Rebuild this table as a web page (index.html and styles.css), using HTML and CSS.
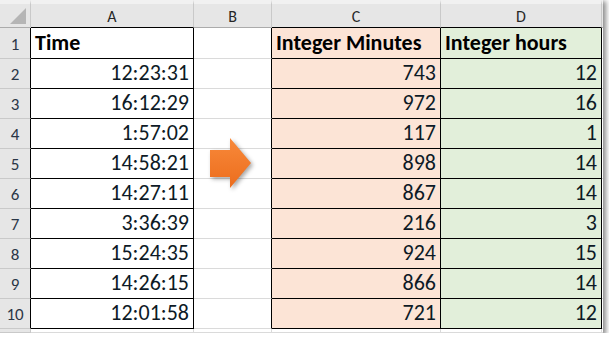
FILE: index.html
```html
<!DOCTYPE html>
<html>
<head>
<meta charset="utf-8">
<link rel="stylesheet" href="styles.css">
</head>
<body>
<div class="frame">
  <div class="sheet">
    <div class="c hd corner"><svg width="18" height="18" viewBox="0 0 18 18"><polygon points="17,1 17,17 1,17" fill="#b5b5b5"/></svg></div>
    <div class="c hd kb">A</div>
    <div class="c hd">B</div>
    <div class="c hd kb">C</div>
    <div class="c hd kb">D</div>
    <div class="c hd e"></div>

    <div class="c rh">1</div>
    <div class="c a k b">Time</div>
    <div class="c gap"></div>
    <div class="c mins k b">Integer Minutes</div>
    <div class="c hrs k b">Integer hours</div>
    <div class="c e"></div>

    <div class="c rh">2</div>
    <div class="c a k n">12:23:31</div>
    <div class="c gap"></div>
    <div class="c mins k n">743</div>
    <div class="c hrs k n">12</div>
    <div class="c e"></div>

    <div class="c rh">3</div>
    <div class="c a k n">16:12:29</div>
    <div class="c gap"></div>
    <div class="c mins k n">972</div>
    <div class="c hrs k n">16</div>
    <div class="c e"></div>

    <div class="c rh">4</div>
    <div class="c a k n">1:57:02</div>
    <div class="c gap"></div>
    <div class="c mins k n">117</div>
    <div class="c hrs k n">1</div>
    <div class="c e"></div>

    <div class="c rh">5</div>
    <div class="c a k n">14:58:21</div>
    <div class="c gap"></div>
    <div class="c mins k n">898</div>
    <div class="c hrs k n">14</div>
    <div class="c e"></div>

    <div class="c rh">6</div>
    <div class="c a k n">14:27:11</div>
    <div class="c gap"></div>
    <div class="c mins k n">867</div>
    <div class="c hrs k n">14</div>
    <div class="c e"></div>

    <div class="c rh">7</div>
    <div class="c a k n">3:36:39</div>
    <div class="c gap"></div>
    <div class="c mins k n">216</div>
    <div class="c hrs k n">3</div>
    <div class="c e"></div>

    <div class="c rh">8</div>
    <div class="c a k n">15:24:35</div>
    <div class="c gap"></div>
    <div class="c mins k n">924</div>
    <div class="c hrs k n">15</div>
    <div class="c e"></div>

    <div class="c rh">9</div>
    <div class="c a k n">14:26:15</div>
    <div class="c gap"></div>
    <div class="c mins k n">866</div>
    <div class="c hrs k n">14</div>
    <div class="c e"></div>

    <div class="c rh">10</div>
    <div class="c a k n">12:01:58</div>
    <div class="c gap"></div>
    <div class="c mins k n">721</div>
    <div class="c hrs k n">12</div>
    <div class="c e"></div>

    <div class="c rh last"></div>
    <div class="c"></div>
    <div class="c"></div>
    <div class="c"></div>
    <div class="c"></div>
    <div class="c e"></div>
  </div>
  <svg class="arrow" width="50" height="58" viewBox="0 0 50 58">
    <defs>
      <linearGradient id="orange" x1="0" y1="0" x2="0" y2="1">
        <stop offset="0" stop-color="#f8893a"/>
        <stop offset="1" stop-color="#ec6d1d"/>
      </linearGradient>
    </defs>
    <polygon points="2,14 22,14 22,2 43,27 22,52 22,41 2,41" fill="url(#orange)"/>
  </svg>
</div>
</body>
</html>
```
FILE: styles.css
```css
html, body {
  margin: 0;
  padding: 0;
  background: #ffffff;
}

.frame {
  position: relative;
  width: 603px;
  height: 333px;
  box-shadow: 2px 2px 5px 1px rgba(0, 0, 0, 0.45);
}

.sheet {
  display: grid;
  grid-template-columns: 31px 163px 78px 169px 161px 1fr;
  grid-template-rows: 28px 31px repeat(9, 30px) 1fr;
  width: 603px;
  height: 333px;
  overflow: hidden;
  background: #ffffff;
  font-family: "Carlito", Calibri, Lato, "Open Sans", sans-serif;
  color: #000000;
}

.c {
  box-sizing: border-box;
  border-right: 1px solid #dadada;
  border-bottom: 1px solid #dadada;
  display: flex;
  align-items: flex-end;
  min-width: 0;
  overflow: hidden;
  white-space: nowrap;
}

/* column header strip */
.hd {
  background: #e6e6e6;
  border-top: 4px solid #f1f1f1;
  border-right-color: #c9c9c9;
  border-bottom-color: #ababab;
  justify-content: center;
  align-items: center;
  font-size: 16px;
  color: #262626;
  padding-top: 1px;
}

.hd.kb {
  border-bottom-color: #000000;
}

.corner {
  justify-content: flex-start;
  align-items: flex-start;
  padding: 3px 0 0 9px;
}

.corner svg {
  display: block;
}

/* row number strip */
.rh {
  background: #e6e6e6;
  border-right-color: #000000;
  border-bottom-color: #c9c9c9;
  justify-content: center;
  align-items: center;
  font-size: 17px;
  color: #2a3646;
  padding-top: 2px;
}

.rh.last {
  border-right-color: #c9c9c9;
}

.gap {
  border-right-color: #000000;
}

.k {
  border-right-color: #000000;
  border-bottom-color: #000000;
}

.b {
  font-weight: bold;
  font-size: 22px;
  line-height: 24px;
  padding: 0 4px 3px 4px;
}

.n {
  font-size: 22px;
  line-height: 24px;
  justify-content: flex-end;
  padding: 0 4px 3px 4px;
  color: #0d1a26;
}

.mins {
  background: #fce4d6;
}

.hrs {
  background: #e2efda;
}

.e {
  border-right: none;
}

.arrow {
  position: absolute;
  left: 208px;
  top: 136px;
  filter: drop-shadow(2px 2px 2px rgba(0, 0, 0, 0.35));
}
```
